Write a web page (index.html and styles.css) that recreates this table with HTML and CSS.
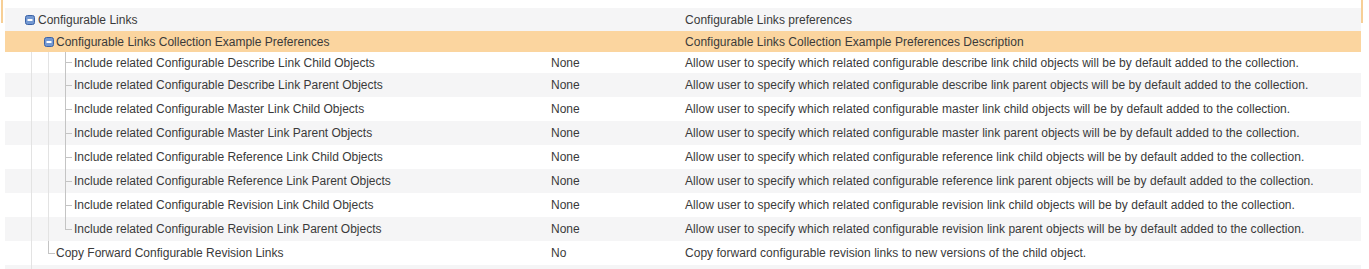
FILE: index.html
```html
<!DOCTYPE html>
<html>
<head>
<meta charset="utf-8">
<title>Configurable Links preferences</title>
<link rel="stylesheet" href="styles.css">
</head>
<body>
<div class="grid">
  <span class="edge edge-l"></span>
  <span class="edge edge-r"></span>

  <div class="row alt r1">
    <div class="name lvl1">
      <svg class="tog" width="10" height="10" viewBox="0 0 10 10"><rect x="0.5" y="0.5" width="9" height="9" rx="2" fill="#7298d2" stroke="#3b62a6"/><line x1="2.5" y1="5" x2="7.5" y2="5" stroke="#fff" stroke-width="2"/></svg>
      <span class="label">Configurable Links</span>
    </div>
    <div class="val"></div>
    <div class="desc">Configurable Links preferences</div>
  </div>

  <div class="row sel r2">
    <div class="name lvl2">
      <svg class="tog" width="10" height="10" viewBox="0 0 10 10"><rect x="0.5" y="0.5" width="9" height="9" rx="2" fill="#7298d2" stroke="#3b62a6"/><line x1="2.5" y1="5" x2="7.5" y2="5" stroke="#fff" stroke-width="2"/></svg>
      <span class="label">Configurable Links Collection Example Preferences</span>
    </div>
    <div class="val"></div>
    <div class="desc">Configurable Links Collection Example Preferences Description</div>
  </div>

  <div class="row r3">
    <div class="name"><span class="ind"></span><span class="ind"></span><span class="conn"></span><span class="label">Include related Configurable Describe Link Child Objects</span></div>
    <div class="val">None</div>
    <div class="desc">Allow user to specify which related configurable describe link child objects will be by default added to the collection.</div>
  </div>

  <div class="row alt">
    <div class="name"><span class="ind"></span><span class="ind"></span><span class="conn"></span><span class="label">Include related Configurable Describe Link Parent Objects</span></div>
    <div class="val">None</div>
    <div class="desc">Allow user to specify which related configurable describe link parent objects will be by default added to the collection.</div>
  </div>

  <div class="row">
    <div class="name"><span class="ind"></span><span class="ind"></span><span class="conn"></span><span class="label">Include related Configurable Master Link Child Objects</span></div>
    <div class="val">None</div>
    <div class="desc">Allow user to specify which related configurable master link child objects will be by default added to the collection.</div>
  </div>

  <div class="row alt">
    <div class="name"><span class="ind"></span><span class="ind"></span><span class="conn"></span><span class="label">Include related Configurable Master Link Parent Objects</span></div>
    <div class="val">None</div>
    <div class="desc">Allow user to specify which related configurable master link parent objects will be by default added to the collection.</div>
  </div>

  <div class="row">
    <div class="name"><span class="ind"></span><span class="ind"></span><span class="conn"></span><span class="label">Include related Configurable Reference Link Child Objects</span></div>
    <div class="val">None</div>
    <div class="desc">Allow user to specify which related configurable reference link child objects will be by default added to the collection.</div>
  </div>

  <div class="row alt">
    <div class="name"><span class="ind"></span><span class="ind"></span><span class="conn"></span><span class="label">Include related Configurable Reference Link Parent Objects</span></div>
    <div class="val">None</div>
    <div class="desc">Allow user to specify which related configurable reference link parent objects will be by default added to the collection.</div>
  </div>

  <div class="row">
    <div class="name"><span class="ind"></span><span class="ind"></span><span class="conn"></span><span class="label">Include related Configurable Revision Link Child Objects</span></div>
    <div class="val">None</div>
    <div class="desc">Allow user to specify which related configurable revision link child objects will be by default added to the collection.</div>
  </div>

  <div class="row alt">
    <div class="name"><span class="ind"></span><span class="ind"></span><span class="conn last"></span><span class="label">Include related Configurable Revision Link Parent Objects</span></div>
    <div class="val">None</div>
    <div class="desc">Allow user to specify which related configurable revision link parent objects will be by default added to the collection.</div>
  </div>

  <div class="row">
    <div class="name"><span class="ind"></span><span class="conn last short"></span><span class="label">Copy Forward Configurable Revision Links</span></div>
    <div class="val">No</div>
    <div class="desc">Copy forward configurable revision links to new versions of the child object.</div>
  </div>

  <div class="row alt stub">
    <div class="name"><span class="ind"></span></div>
    <div class="val"></div>
    <div class="desc"></div>
  </div>
</div>
</body>
</html>
```

FILE: styles.css
```css
html, body {
  margin: 0;
  padding: 0;
  background: #ffffff;
  overflow: hidden;
}

.grid {
  position: relative;
  padding: 8px 0 0 5px;
  width: 1356px;
  font-family: "Liberation Sans", Arial, sans-serif;
  font-size: 12px;
  color: #3a3a3a;
}

.edge {
  position: absolute;
  top: 0;
  width: 2px;
  height: 23px;
  background: #f7cf96;
}
.edge-l { left: 1px; }
.edge-r { left: 1361px; }

.row {
  display: grid;
  grid-template-columns: 541px 134px 1fr;
  height: 24px;
  background: #ffffff;
}
.row.alt { background: #f5f5f6; }
.row.sel { background: #fbd59f; }
.row.r1 { height: 23px; }
.row.r2 { height: 21px; }
.row.r3 { height: 21px; }
.row.stub { height: 4px; }

.name {
  display: flex;
  align-items: stretch;
  padding-left: 26px;
  white-space: nowrap;
  overflow: hidden;
}
.name.lvl1 { padding-left: 20px; }
.name.lvl2 { padding-left: 39px; }

.tog {
  align-self: center;
  flex: none;
  margin-right: 3px;
}
.name.lvl2 .tog { margin-right: 2px; }

.ind {
  flex: none;
  width: 17px;
  box-sizing: border-box;
  border-left: 1px solid #e3e3e3;
}

.conn {
  flex: none;
  width: 9px;
  background:
    linear-gradient(#c4c4c4, #c4c4c4) left top / 1px 100% no-repeat,
    linear-gradient(#c4c4c4, #c4c4c4) left center / 7px 1px no-repeat;
}
.conn.last {
  background:
    linear-gradient(#c4c4c4, #c4c4c4) left top / 1px 50% no-repeat,
    linear-gradient(#c4c4c4, #c4c4c4) left center / 7px 1px no-repeat;
}
.conn.short { width: 8px; }

.label {
  align-self: center;
}

.val, .desc {
  align-self: center;
  padding-left: 5px;
  white-space: nowrap;
  overflow: hidden;
}
.desc { letter-spacing: 0.03px; }
```
